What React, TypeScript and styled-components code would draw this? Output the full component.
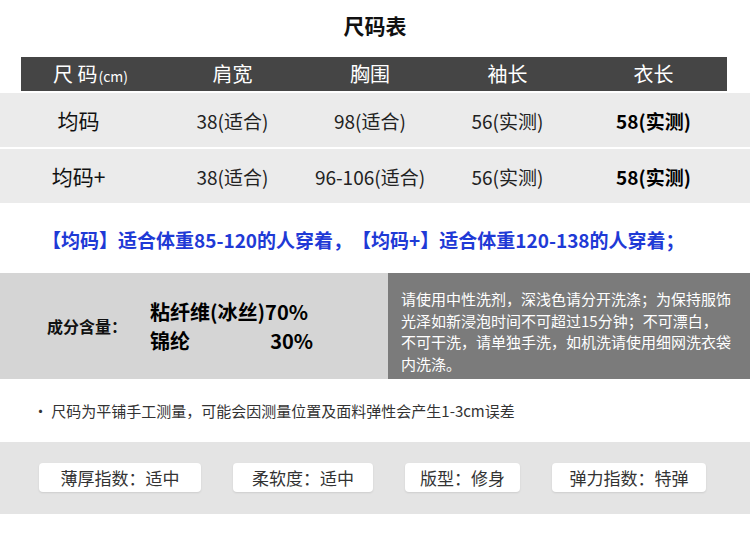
import React from 'react';
import styled, { createGlobalStyle } from 'styled-components';

const GlobalStyle = createGlobalStyle`
    body {
        margin: 0;
        background: #fff;
        font-family: 'Noto Sans CJK SC', 'Noto Sans', sans-serif;
        color: #222;
        text-spacing-trim: space-all;
    }
`;

const Page = styled.div`
    width: 750px;
    height: 533px;
    overflow: hidden;
    background: #fff;
`;

const Title = styled.h1`
    margin: 0;
    height: 57px;
    display: flex;
    align-items: center;
    justify-content: center;
    padding-bottom: 8px;
    box-sizing: border-box;
    font-size: 21px;
    font-weight: bold;
    color: #111;
`;

const cols = '139px 145px 130px 145px 147px';

const HeadBar = styled.div`
    margin: 0 23px 2px 21px;
    height: 34px;
    background: #454545;
    display: grid;
    grid-template-columns: ${cols};
    align-items: center;
    color: #fff;
    font-size: 20px;
    line-height: 1;
`;

const HeadCell = styled.div`
    text-align: center;

    small {
        font-size: 14px;
        margin-left: 1px;
    }
`;

const Row = styled.div`
    height: 54px;
    background: #ebebeb;
    padding: 0 21px;
    display: grid;
    grid-template-columns: ${cols};
    align-items: center;
    margin-bottom: 2px;
`;

const Cell = styled.div<{ $bold?: boolean }>`
    text-align: center;
    font-size: 19px;
    font-weight: ${(p) => (p.$bold ? 'bold' : 'normal')};
    color: ${(p) => (p.$bold ? '#000' : '#222')};
`;

const RowLabel = styled.div`
    text-align: center;
    font-size: 21px;
    color: #111;
    padding-right: 24px;
`;

const Notice = styled.div`
    height: 68px;
    display: flex;
    align-items: center;
    padding-left: 42px;
    font-size: 19px;
    font-weight: bold;
    color: #1f3ad6;
`;

const Material = styled.div`
    height: 106px;
    display: flex;
`;

const MaterialLeft = styled.div`
    width: 388px;
    background: #d5d5d5;
    display: flex;
    align-items: center;
    padding-left: 47px;
    box-sizing: border-box;
`;

const MaterialLabel = styled.div`
    font-size: 16px;
    font-weight: bold;
    color: #111;
    width: 103px;
`;

const Composition = styled.div`
    width: 163px;
    font-size: 20px;
    font-weight: bold;
    color: #000;
    line-height: 29px;
`;

const CompLine = styled.div`
    display: flex;
    justify-content: space-between;
`;

const MaterialRight = styled.div`
    flex: 1;
    background: #7b7b7b;
    color: #fff;
    font-size: 15px;
    line-height: 21.5px;
    padding: 15px 0 0 13px;
    white-space: nowrap;
`;

const Remark = styled.div`
    height: 63px;
    display: flex;
    align-items: center;
    padding-left: 33px;
    font-size: 15px;
    color: #333;
`;

const PillBand = styled.div`
    height: 72px;
    background: #e4e4e4;
    display: flex;
    align-items: center;
    gap: 32px;
    padding-left: 39px;
    padding-bottom: 1px;
    box-sizing: border-box;
`;

const Pill = styled.div<{ $w: number }>`
    width: ${(p) => p.$w}px;
    height: 29px;
    background: #fff;
    border-radius: 4px;
    box-shadow: 0 1px 2px #0000001a;
    display: flex;
    align-items: center;
    justify-content: center;
    font-size: 17px;
    color: #333;
`;

const rows = [
    { name: '均码', v: ['38(适合)', '98(适合)', '56(实测)', '58(实测)'] },
    { name: '均码+', v: ['38(适合)', '96-106(适合)', '56(实测)', '58(实测)'] },
];

const pills = [
    { text: '薄厚指数：适中', w: 162 },
    { text: '柔软度：适中', w: 140 },
    { text: '版型：修身', w: 115 },
    { text: '弹力指数：特弹', w: 154 },
];

const care = [
    '请使用中性洗剂，深浅色请分开洗涤；为保持服饰',
    '光泽如新浸泡时间不可超过15分钟；不可漂白，',
    '不可干洗，请单独手洗，如机洗请使用细网洗衣袋',
    '内洗涤。',
];

export default function App() {
    return (
        <Page>
            <GlobalStyle />
            <Title>尺码表</Title>
            <HeadBar>
                <HeadCell>
                    尺 码<small>(cm)</small>
                </HeadCell>
                <HeadCell>肩宽</HeadCell>
                <HeadCell>胸围</HeadCell>
                <HeadCell>袖长</HeadCell>
                <HeadCell>衣长</HeadCell>
            </HeadBar>
            {rows.map((r) => (
                <Row key={r.name}>
                    <RowLabel>{r.name}</RowLabel>
                    {r.v.map((v, i) => (
                        <Cell key={i} $bold={i === 3}>
                            {v}
                        </Cell>
                    ))}
                </Row>
            ))}
            <Notice>
                【均码】适合体重85-120的人穿着，【均码+】适合体重120-138的人穿着；
            </Notice>
            <Material>
                <MaterialLeft>
                    <MaterialLabel>成分含量：</MaterialLabel>
                    <Composition>
                        <CompLine>
                            <span>粘纤维(冰丝)70%</span>
                        </CompLine>
                        <CompLine>
                            <span>锦纶</span>
                            <span>30%</span>
                        </CompLine>
                    </Composition>
                </MaterialLeft>
                <MaterialRight>
                    {care.map((line) => (
                        <div key={line}>{line}</div>
                    ))}
                </MaterialRight>
            </Material>
            <Remark>· 尺码为平铺手工测量，可能会因测量位置及面料弹性会产生1-3cm误差</Remark>
            <PillBand>
                {pills.map((p) => (
                    <Pill key={p.text} $w={p.w}>
                        {p.text}
                    </Pill>
                ))}
            </PillBand>
        </Page>
    );
}
